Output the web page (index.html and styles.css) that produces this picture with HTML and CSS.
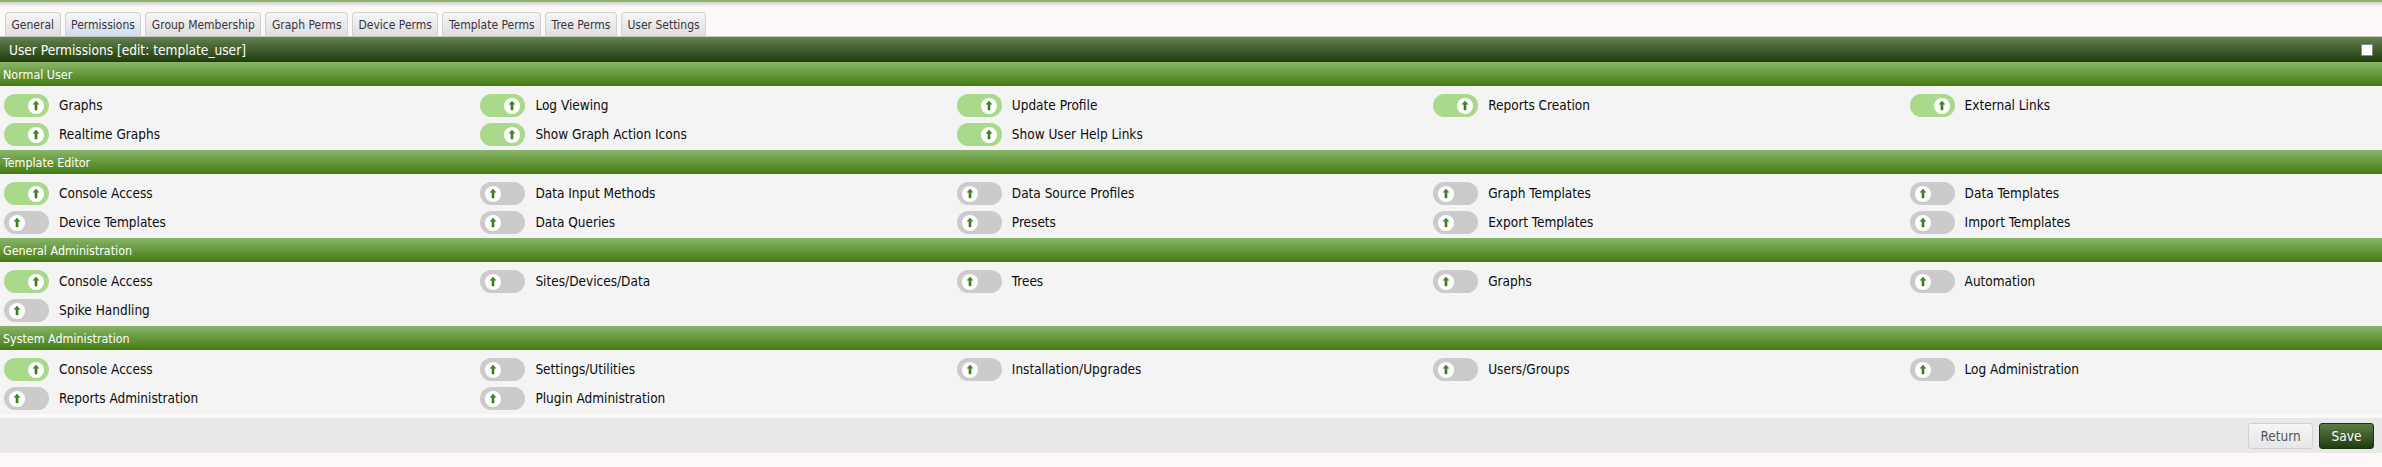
FILE: index.html
```html
<!DOCTYPE html>
<html>
<head>
<meta charset="utf-8">
<link rel="stylesheet" href="styles.css">
</head>
<body>
<div class="topline"></div>
<div class="topshade"></div>
<nav class="tabs">
  <span class="tab">General</span>
  <span class="tab active">Permissions</span>
  <span class="tab">Group Membership</span>
  <span class="tab">Graph Perms</span>
  <span class="tab">Device Perms</span>
  <span class="tab">Template Perms</span>
  <span class="tab">Tree Perms</span>
  <span class="tab">User Settings</span>
</nav>
<div class="panel">
  <div class="titlebar">
    <span class="title">User Permissions [edit: template_user]</span>
    <span class="checkbox"></span>
  </div>

  <div class="section">Normal User</div>
  <div class="grid">
    <div class="item"><span class="switch on"><span class="knob"><svg viewBox="0 0 10 12" class="arrow"><path d="M5 0.5 L8.5 4.5 L6.3 4.5 L6.3 11.5 L3.7 11.5 L3.7 4.5 L1.5 4.5 Z"/></svg></span></span><span class="label">Graphs</span></div>
    <div class="item"><span class="switch on"><span class="knob"><svg viewBox="0 0 10 12" class="arrow"><path d="M5 0.5 L8.5 4.5 L6.3 4.5 L6.3 11.5 L3.7 11.5 L3.7 4.5 L1.5 4.5 Z"/></svg></span></span><span class="label">Log Viewing</span></div>
    <div class="item"><span class="switch on"><span class="knob"><svg viewBox="0 0 10 12" class="arrow"><path d="M5 0.5 L8.5 4.5 L6.3 4.5 L6.3 11.5 L3.7 11.5 L3.7 4.5 L1.5 4.5 Z"/></svg></span></span><span class="label">Update Profile</span></div>
    <div class="item"><span class="switch on"><span class="knob"><svg viewBox="0 0 10 12" class="arrow"><path d="M5 0.5 L8.5 4.5 L6.3 4.5 L6.3 11.5 L3.7 11.5 L3.7 4.5 L1.5 4.5 Z"/></svg></span></span><span class="label">Reports Creation</span></div>
    <div class="item"><span class="switch on"><span class="knob"><svg viewBox="0 0 10 12" class="arrow"><path d="M5 0.5 L8.5 4.5 L6.3 4.5 L6.3 11.5 L3.7 11.5 L3.7 4.5 L1.5 4.5 Z"/></svg></span></span><span class="label">External Links</span></div>
    <div class="item"><span class="switch on"><span class="knob"><svg viewBox="0 0 10 12" class="arrow"><path d="M5 0.5 L8.5 4.5 L6.3 4.5 L6.3 11.5 L3.7 11.5 L3.7 4.5 L1.5 4.5 Z"/></svg></span></span><span class="label">Realtime Graphs</span></div>
    <div class="item"><span class="switch on"><span class="knob"><svg viewBox="0 0 10 12" class="arrow"><path d="M5 0.5 L8.5 4.5 L6.3 4.5 L6.3 11.5 L3.7 11.5 L3.7 4.5 L1.5 4.5 Z"/></svg></span></span><span class="label">Show Graph Action Icons</span></div>
    <div class="item"><span class="switch on"><span class="knob"><svg viewBox="0 0 10 12" class="arrow"><path d="M5 0.5 L8.5 4.5 L6.3 4.5 L6.3 11.5 L3.7 11.5 L3.7 4.5 L1.5 4.5 Z"/></svg></span></span><span class="label">Show User Help Links</span></div>
  </div>

  <div class="section">Template Editor</div>
  <div class="grid">
    <div class="item"><span class="switch on"><span class="knob"><svg viewBox="0 0 10 12" class="arrow"><path d="M5 0.5 L8.5 4.5 L6.3 4.5 L6.3 11.5 L3.7 11.5 L3.7 4.5 L1.5 4.5 Z"/></svg></span></span><span class="label">Console Access</span></div>
    <div class="item"><span class="switch off"><span class="knob"><svg viewBox="0 0 10 12" class="arrow"><path d="M5 0.5 L8.5 4.5 L6.3 4.5 L6.3 11.5 L3.7 11.5 L3.7 4.5 L1.5 4.5 Z"/></svg></span></span><span class="label">Data Input Methods</span></div>
    <div class="item"><span class="switch off"><span class="knob"><svg viewBox="0 0 10 12" class="arrow"><path d="M5 0.5 L8.5 4.5 L6.3 4.5 L6.3 11.5 L3.7 11.5 L3.7 4.5 L1.5 4.5 Z"/></svg></span></span><span class="label">Data Source Profiles</span></div>
    <div class="item"><span class="switch off"><span class="knob"><svg viewBox="0 0 10 12" class="arrow"><path d="M5 0.5 L8.5 4.5 L6.3 4.5 L6.3 11.5 L3.7 11.5 L3.7 4.5 L1.5 4.5 Z"/></svg></span></span><span class="label">Graph Templates</span></div>
    <div class="item"><span class="switch off"><span class="knob"><svg viewBox="0 0 10 12" class="arrow"><path d="M5 0.5 L8.5 4.5 L6.3 4.5 L6.3 11.5 L3.7 11.5 L3.7 4.5 L1.5 4.5 Z"/></svg></span></span><span class="label">Data Templates</span></div>
    <div class="item"><span class="switch off"><span class="knob"><svg viewBox="0 0 10 12" class="arrow"><path d="M5 0.5 L8.5 4.5 L6.3 4.5 L6.3 11.5 L3.7 11.5 L3.7 4.5 L1.5 4.5 Z"/></svg></span></span><span class="label">Device Templates</span></div>
    <div class="item"><span class="switch off"><span class="knob"><svg viewBox="0 0 10 12" class="arrow"><path d="M5 0.5 L8.5 4.5 L6.3 4.5 L6.3 11.5 L3.7 11.5 L3.7 4.5 L1.5 4.5 Z"/></svg></span></span><span class="label">Data Queries</span></div>
    <div class="item"><span class="switch off"><span class="knob"><svg viewBox="0 0 10 12" class="arrow"><path d="M5 0.5 L8.5 4.5 L6.3 4.5 L6.3 11.5 L3.7 11.5 L3.7 4.5 L1.5 4.5 Z"/></svg></span></span><span class="label">Presets</span></div>
    <div class="item"><span class="switch off"><span class="knob"><svg viewBox="0 0 10 12" class="arrow"><path d="M5 0.5 L8.5 4.5 L6.3 4.5 L6.3 11.5 L3.7 11.5 L3.7 4.5 L1.5 4.5 Z"/></svg></span></span><span class="label">Export Templates</span></div>
    <div class="item"><span class="switch off"><span class="knob"><svg viewBox="0 0 10 12" class="arrow"><path d="M5 0.5 L8.5 4.5 L6.3 4.5 L6.3 11.5 L3.7 11.5 L3.7 4.5 L1.5 4.5 Z"/></svg></span></span><span class="label">Import Templates</span></div>
  </div>

  <div class="section">General Administration</div>
  <div class="grid">
    <div class="item"><span class="switch on"><span class="knob"><svg viewBox="0 0 10 12" class="arrow"><path d="M5 0.5 L8.5 4.5 L6.3 4.5 L6.3 11.5 L3.7 11.5 L3.7 4.5 L1.5 4.5 Z"/></svg></span></span><span class="label">Console Access</span></div>
    <div class="item"><span class="switch off"><span class="knob"><svg viewBox="0 0 10 12" class="arrow"><path d="M5 0.5 L8.5 4.5 L6.3 4.5 L6.3 11.5 L3.7 11.5 L3.7 4.5 L1.5 4.5 Z"/></svg></span></span><span class="label">Sites/Devices/Data</span></div>
    <div class="item"><span class="switch off"><span class="knob"><svg viewBox="0 0 10 12" class="arrow"><path d="M5 0.5 L8.5 4.5 L6.3 4.5 L6.3 11.5 L3.7 11.5 L3.7 4.5 L1.5 4.5 Z"/></svg></span></span><span class="label">Trees</span></div>
    <div class="item"><span class="switch off"><span class="knob"><svg viewBox="0 0 10 12" class="arrow"><path d="M5 0.5 L8.5 4.5 L6.3 4.5 L6.3 11.5 L3.7 11.5 L3.7 4.5 L1.5 4.5 Z"/></svg></span></span><span class="label">Graphs</span></div>
    <div class="item"><span class="switch off"><span class="knob"><svg viewBox="0 0 10 12" class="arrow"><path d="M5 0.5 L8.5 4.5 L6.3 4.5 L6.3 11.5 L3.7 11.5 L3.7 4.5 L1.5 4.5 Z"/></svg></span></span><span class="label">Automation</span></div>
    <div class="item"><span class="switch off"><span class="knob"><svg viewBox="0 0 10 12" class="arrow"><path d="M5 0.5 L8.5 4.5 L6.3 4.5 L6.3 11.5 L3.7 11.5 L3.7 4.5 L1.5 4.5 Z"/></svg></span></span><span class="label">Spike Handling</span></div>
  </div>

  <div class="section">System Administration</div>
  <div class="grid">
    <div class="item"><span class="switch on"><span class="knob"><svg viewBox="0 0 10 12" class="arrow"><path d="M5 0.5 L8.5 4.5 L6.3 4.5 L6.3 11.5 L3.7 11.5 L3.7 4.5 L1.5 4.5 Z"/></svg></span></span><span class="label">Console Access</span></div>
    <div class="item"><span class="switch off"><span class="knob"><svg viewBox="0 0 10 12" class="arrow"><path d="M5 0.5 L8.5 4.5 L6.3 4.5 L6.3 11.5 L3.7 11.5 L3.7 4.5 L1.5 4.5 Z"/></svg></span></span><span class="label">Settings/Utilities</span></div>
    <div class="item"><span class="switch off"><span class="knob"><svg viewBox="0 0 10 12" class="arrow"><path d="M5 0.5 L8.5 4.5 L6.3 4.5 L6.3 11.5 L3.7 11.5 L3.7 4.5 L1.5 4.5 Z"/></svg></span></span><span class="label">Installation/Upgrades</span></div>
    <div class="item"><span class="switch off"><span class="knob"><svg viewBox="0 0 10 12" class="arrow"><path d="M5 0.5 L8.5 4.5 L6.3 4.5 L6.3 11.5 L3.7 11.5 L3.7 4.5 L1.5 4.5 Z"/></svg></span></span><span class="label">Users/Groups</span></div>
    <div class="item"><span class="switch off"><span class="knob"><svg viewBox="0 0 10 12" class="arrow"><path d="M5 0.5 L8.5 4.5 L6.3 4.5 L6.3 11.5 L3.7 11.5 L3.7 4.5 L1.5 4.5 Z"/></svg></span></span><span class="label">Log Administration</span></div>
    <div class="item"><span class="switch off"><span class="knob"><svg viewBox="0 0 10 12" class="arrow"><path d="M5 0.5 L8.5 4.5 L6.3 4.5 L6.3 11.5 L3.7 11.5 L3.7 4.5 L1.5 4.5 Z"/></svg></span></span><span class="label">Reports Administration</span></div>
    <div class="item"><span class="switch off"><span class="knob"><svg viewBox="0 0 10 12" class="arrow"><path d="M5 0.5 L8.5 4.5 L6.3 4.5 L6.3 11.5 L3.7 11.5 L3.7 4.5 L1.5 4.5 Z"/></svg></span></span><span class="label">Plugin Administration</span></div>
  </div>
</div>
<div class="footer">
  <span class="btn return">Return</span>
  <span class="btn save">Save</span>
</div>
</body>
</html>
```

FILE: styles.css
```css
html, body {
  margin: 0;
  padding: 0;
}
body {
  background: #fdf9f9;
  font-family: "DejaVu Sans Condensed", "DejaVu Sans", sans-serif;
  font-stretch: condensed;
  font-size: 13.5px;
  color: #111;
  width: 2382px;
  height: 467px;
  overflow: hidden;
}
.topline {
  height: 2px;
  background: #8db86c;
}
.topshade {
  height: 5px;
  background: linear-gradient(#d2d2d2, #fdf9f9);
}
.tabs {
  display: flex;
  gap: 4px;
  padding: 5px 0 0 5px;
  height: 24px;
  border-bottom: 1px solid #c4c4c4;
}
.tab {
  display: flex;
  align-items: center;
  height: 23px;
  padding: 0 5.5px;
  border: 1px solid #d2d2d2;
  border-bottom: none;
  border-radius: 4px 4px 0 0;
  background: linear-gradient(#f6f6f6, #dedede);
  color: #3a3342;
  font-size: 12px;
}
.tab.active {
  background: linear-gradient(#f2f4f6 20%, #cddde9);
}
.titlebar {
  display: flex;
  align-items: center;
  justify-content: space-between;
  height: 25px;
  padding: 0 9px;
  background: linear-gradient(#64814f, #1f390b);
  color: #fff;
}
.title {
  font-size: 13.6px;
}
.checkbox {
  width: 10px;
  height: 10px;
  background: #fff;
  border: 1px solid #8a8a8a;
  border-radius: 1px;
}
.section {
  display: flex;
  align-items: center;
  height: 24px;
  padding: 0 3px;
  background: linear-gradient(#88b567, #447c12);
  color: #fff;
  font-size: 12.4px;
}
.grid {
  display: grid;
  grid-template-columns: repeat(5, 1fr);
  grid-auto-rows: 29px;
  padding: 2px 0 4px 0;
  background: #f4f4f4;
}
.item {
  display: flex;
  align-items: flex-start;
  gap: 10px;
  padding: 6px 0 0 4px;
}
.switch {
  display: flex;
  align-items: center;
  width: 45px;
  height: 23px;
  box-sizing: border-box;
  border-radius: 12px;
  padding: 0 5px;
  flex: none;
}
.switch.on {
  background: #a9d98b;
  justify-content: flex-end;
}
.switch.off {
  background: #cbcbcb;
  justify-content: flex-start;
}
.knob {
  display: flex;
  align-items: center;
  justify-content: center;
  width: 16px;
  height: 16px;
  border-radius: 50%;
  background: #fff;
}
.arrow {
  width: 8px;
  height: 11px;
  fill: #3f8a22;
  stroke: #2a6512;
  stroke-width: 0.6;
}
.label {
  line-height: 22px;
  font-size: 13.5px;
  color: #0c0c0c;
}
.footer {
  display: flex;
  justify-content: flex-end;
  align-items: center;
  gap: 6px;
  height: 35px;
  margin-top: 4px;
  padding-right: 8px;
  background: #e9e9e9;
}
.btn {
  display: flex;
  align-items: center;
  justify-content: center;
  height: 26px;
  box-sizing: border-box;
  border-radius: 3px;
  font-size: 13.5px;
}
.return {
  width: 65px;
  border: 1px solid #d0d0d0;
  background: linear-gradient(#f6f6f6, #e6e6e6);
  color: #555;
}
.save {
  width: 55px;
  border: 1px solid #1d3410;
  background: linear-gradient(#5a7b47, #213d0f);
  color: #fff;
}
```
